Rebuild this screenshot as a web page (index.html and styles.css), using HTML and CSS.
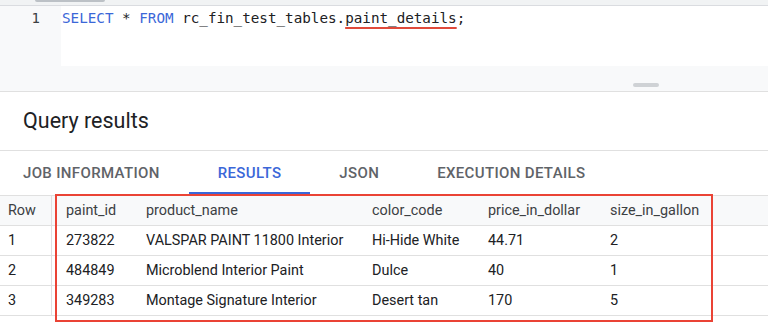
FILE: index.html
```html
<!DOCTYPE html>
<html>
<head>
<meta charset="utf-8">
<link rel="stylesheet" href="styles.css">
</head>
<body>
<div class="page">
  <div class="topstrip"><div class="tabshadow"></div></div>
  <div class="editor">
    <div class="codearea">
      <div class="gutter">1</div>
      <div class="code"><span class="kw">SELECT</span> * <span class="kw">FROM</span> rc_fin_test_tables.<span class="err">paint_details</span>;</div>
    </div>
    <div class="editor-foot"><div class="handle"></div></div>
  </div>
  <div class="title">Query results</div>
  <div class="tabs">
    <div class="tab first">JOB INFORMATION</div>
    <div class="tab active">RESULTS</div>
    <div class="tab">JSON</div>
    <div class="tab">EXECUTION DETAILS</div>
  </div>
  <div class="results">
    <div class="grid">
      <div class="cell head rowc">Row</div>
      <div class="cell head">paint_id</div>
      <div class="cell head">product_name</div>
      <div class="cell head">color_code</div>
      <div class="cell head">price_in_dollar</div>
      <div class="cell head">size_in_gallon</div>

      <div class="cell rowc">1</div>
      <div class="cell">273822</div>
      <div class="cell">VALSPAR PAINT 11800 Interior</div>
      <div class="cell">Hi-Hide White</div>
      <div class="cell">44.71</div>
      <div class="cell">2</div>

      <div class="cell rowc">2</div>
      <div class="cell">484849</div>
      <div class="cell">Microblend Interior Paint</div>
      <div class="cell">Dulce</div>
      <div class="cell">40</div>
      <div class="cell">1</div>

      <div class="cell rowc">3</div>
      <div class="cell">349283</div>
      <div class="cell">Montage Signature Interior</div>
      <div class="cell">Desert tan</div>
      <div class="cell">170</div>
      <div class="cell">5</div>
    </div>
    <div class="highlight"></div>
  </div>
</div>
</body>
</html>
```
FILE: styles.css
```css
* { box-sizing: border-box; }
html, body { margin: 0; padding: 0; background: #fff; }
body { font-family: Roboto, "Liberation Sans", sans-serif; color: #202124; width: 768px; height: 331px; overflow: hidden; }

.topstrip { height: 6px; background: #f1f3f4; border-bottom: 1px solid #dadce0; position: relative; }
.tabshadow { position: absolute; left: 35px; top: 0; width: 70px; height: 2px; background: #9aa0a6; border-radius: 0 0 3px 3px; opacity: 0.6; }

.editor { background: #f8f9fa; border-bottom: 1px solid #e0e0e0; }
.codearea { display: flex; height: 60px; }
.gutter { width: 61px; padding-right: 21px; text-align: right; font-family: "DejaVu Sans Mono", monospace; font-size: 14px; line-height: 24px; color: #3c4043; }
.code { flex: 1; background: #fff; font-family: "DejaVu Sans Mono", monospace; font-size: 14.25px; line-height: 24px; color: #202124; padding-left: 1px; white-space: pre; }
.kw { color: #3b67d8; }
.err { text-decoration: underline; text-decoration-color: #e04a3a; text-underline-offset: 4px; text-decoration-thickness: 2px; }
.editor-foot { height: 25px; position: relative; }
.handle { position: absolute; left: 633px; top: 17px; width: 26px; height: 4px; border-radius: 2px; background: #cfd2d5; }

.title { height: 59px; padding-left: 23px; font-size: 21.5px; line-height: 58px; color: #202124; border-bottom: 1px solid #e0e0e0; }

.tabs { display: flex; height: 44px; }
.tab { height: 44px; padding: 0 29px; font-size: 15px; font-weight: 500; color: #5f6368; line-height: 44px; letter-spacing: 0.35px; }
.tab.first { padding-left: 23px; }
.tab.active { color: #3b67d8; box-shadow: inset 0 -3px 0 #3b67d8; }

.results { position: relative; }
.grid { display: grid; grid-template-columns: 52px 80px 226px 116px 122px 1fr; border-top: 1px solid #e0e0e0; }
.cell { height: 30px; line-height: 30px; font-size: 14.4px; padding-left: 14px; border-bottom: 1px solid #e0e0e0; white-space: nowrap; color: #202124; }
.cell.head { background: #f8f9fa; color: #3c4043; }
.cell.rowc { padding-left: 8px; border-right: 1px solid #e0e0e0; }
.highlight { position: absolute; left: 55px; top: -1px; width: 658px; height: 128px; border: 2px solid #ea4335; }
```
